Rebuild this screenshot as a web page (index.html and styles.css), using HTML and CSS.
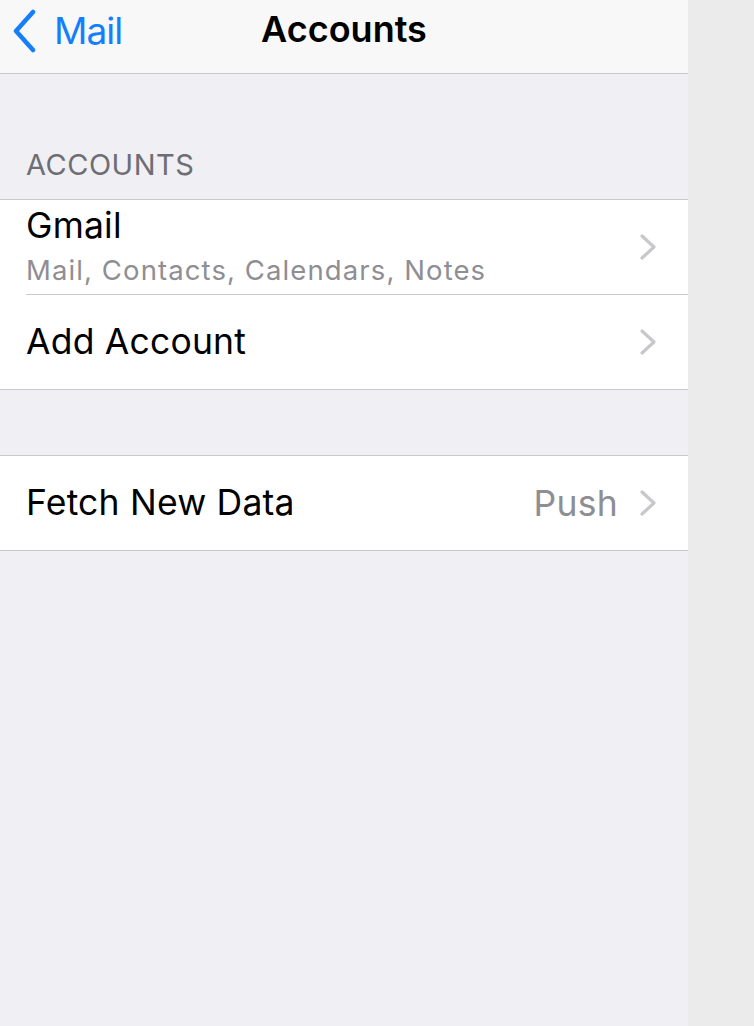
FILE: index.html
```html
<!DOCTYPE html>
<html lang="en">
<head>
  <meta charset="UTF-8">
  <title>Accounts</title>
  <link rel="stylesheet" href="styles.css">
</head>
<body>

<div class="page">
  <div class="phone">
    <div class="navbar">
      <div class="nav-back">
        <svg class="nav-back-icon" viewBox="0 0 26 44" width="26" height="44">
          <path d="M22 3 L5 22 L22 41" fill="none" stroke="#157efb" stroke-width="4.5" stroke-linecap="round" stroke-linejoin="round"/>
        </svg>
        <span>Mail</span>
      </div>
      <div class="nav-title">Accounts</div>
    </div>

    <div class="section-header">ACCOUNTS</div>
    <div class="group">
      <div class="row row-tall">
        <div class="row-main">
          <div class="row-title">Gmail</div>
          <div class="row-sub">Mail, Contacts, Calendars, Notes</div>
        </div>
        <svg class="chevron" viewBox="0 0 18 28" width="18" height="28">
          <path d="M3 3 L15 14 L3 25" fill="none" stroke="#c7c7cc" stroke-width="3.2" stroke-linecap="round" stroke-linejoin="round"/>
        </svg>
      </div>
      <div class="row">
        <div class="row-main">
          <div class="row-title">Add Account</div>
        </div>
        <svg class="chevron" viewBox="0 0 18 28" width="18" height="28">
          <path d="M3 3 L15 14 L3 25" fill="none" stroke="#c7c7cc" stroke-width="3.2" stroke-linecap="round" stroke-linejoin="round"/>
        </svg>
      </div>
    </div>

    <div class="group group-spaced">
      <div class="row">
        <div class="row-main">
          <div class="row-title">Fetch New Data</div>
        </div>
        <span class="row-value">Push</span>
        <svg class="chevron" viewBox="0 0 18 28" width="18" height="28">
          <path d="M3 3 L15 14 L3 25" fill="none" stroke="#c7c7cc" stroke-width="3.2" stroke-linecap="round" stroke-linejoin="round"/>
        </svg>
      </div>
    </div>
  </div>
  <div class="side"></div>
</div>

</body>
</html>
```

FILE: styles.css
```css
html, body {
  margin: 0;
  padding: 0;
  height: 100%;
}

body {
  font-family: Inter, Roboto, "Liberation Sans", sans-serif;
  background: #ebebeb;
}

.page {
  display: flex;
  height: 1026px;
}

.phone {
  width: 688px;
  background: #efeff4;
}

.side {
  flex: 1;
  background: #ebebeb;
}

.navbar {
  position: relative;
  height: 74px;
  padding-bottom: 12px;
  background: #f8f8f8;
  border-bottom: 1px solid #c8c7cc;
  box-sizing: border-box;
  display: flex;
  align-items: center;
}

.nav-back {
  display: flex;
  align-items: center;
  padding-left: 11px;
  color: #157efb;
  font-size: 37px;
  letter-spacing: -1px;
}

.nav-back-icon {
  margin-right: 17px;
}

.nav-title {
  position: absolute;
  left: 0;
  right: 0;
  top: 0;
  bottom: 15px;
  display: flex;
  align-items: center;
  justify-content: center;
  font-size: 36px;
  font-weight: 600;
  color: #000;
  pointer-events: none;
}

.section-header {
  padding: 71px 0 0 26px;
  height: 54px;
  box-sizing: content-box;
  font-size: 29px;
  letter-spacing: 0.5px;
  color: #6d6d72;
  line-height: 40px;
}

.group {
  background: #fff;
  border-top: 1px solid #c8c7cc;
  border-bottom: 1px solid #c8c7cc;
}

.group-spaced {
  margin-top: 65px;
}

.row {
  display: flex;
  align-items: center;
  height: 94px;
  padding-right: 31px;
  margin-left: 26px;
  border-bottom: 1px solid #c8c7cc;
}

.row:last-child {
  border-bottom: none;
}

.row-main {
  flex: 1;
}

.row-title {
  font-size: 35.5px;
  letter-spacing: 0.2px;
  color: #000;
  line-height: 40px;
}

.row-tall .row-title {
  margin-top: -2px;
}

.row-sub {
  font-size: 27.5px;
  letter-spacing: 1.1px;
  color: #8e8e93;
  line-height: 34px;
  margin-top: 7px;
}

.row-value {
  font-size: 35.5px;
  letter-spacing: 0.3px;
  color: #8e8e93;
  margin-right: 21px;
}

.chevron {
  display: block;
}
```
